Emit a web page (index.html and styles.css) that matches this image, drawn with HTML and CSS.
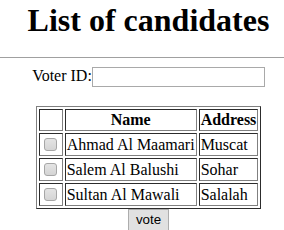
FILE: index.html
```html
<!DOCTYPE html>
<html lang="en">
<head>
    <meta charset="UTF-8">
    <title>List of candidates</title>
    <link rel="stylesheet" href="styles.css">
</head>
<body>
    <h1 class="shift">List of candidates</h1>
    <hr>
    <form class="vote-form shift">
        <p class="voter">Voter ID:<input type="text" class="voter-id"></p>
        <table class="candidates" border="1">
            <tr>
                <th></th>
                <th>Name</th>
                <th>Address</th>
            </tr>
            <tr>
                <td class="check"><input type="checkbox" class="box"></td>
                <td>Ahmad Al Maamari</td>
                <td>Muscat</td>
            </tr>
            <tr>
                <td class="check"><input type="checkbox" class="box"></td>
                <td>Salem Al Balushi</td>
                <td>Sohar</td>
            </tr>
            <tr>
                <td class="check"><input type="checkbox" class="box"></td>
                <td>Sultan Al Mawali</td>
                <td>Salalah</td>
            </tr>
        </table>
        <button type="button" class="vote">vote</button>
    </form>
</body>
</html>
```

FILE: styles.css
```css
body {
    font-family: "Liberation Serif", "Times New Roman", serif;
    margin: 0;
    text-align: center;
}

.shift {
    padding-left: 13px;
}

h1 {
    font-size: 32px;
    margin: 0 0 18px;
    padding-top: 2px;
}

hr {
    border: none;
    border-top: 1px solid #a0a0a0;
    margin: 0;
}

.voter {
    margin: 9px 0 19px;
    font-size: 16px;
}

.voter-id {
    width: 167px;
    height: 16px;
    border: 1px solid #a9a9a9;
    padding: 1px 2px;
    vertical-align: middle;
}

.candidates {
    margin: 0 auto;
    text-align: left;
    font-size: 16px;
}

.candidates td {
    height: 19px;
    padding: 1px;
}

.candidates th {
    text-align: center;
}

.check {
    text-align: center;
    width: 20px;
}

.box {
    appearance: none;
    display: block;
    width: 13px;
    height: 13px;
    margin: 0 auto;
    border: 1px solid #a6a6a6;
    border-radius: 3px;
    background: linear-gradient(#e4e4e4, #d4d4d4);
}

.vote {
    display: block;
    margin: 0 auto;
    font-family: "Liberation Sans", Arial, sans-serif;
    font-size: 13.33px;
    padding: 2px 7px 3px;
    background: #e1e1e1;
    border: 1px solid #adadad;
    border-radius: 0;
    color: #000;
}
```
